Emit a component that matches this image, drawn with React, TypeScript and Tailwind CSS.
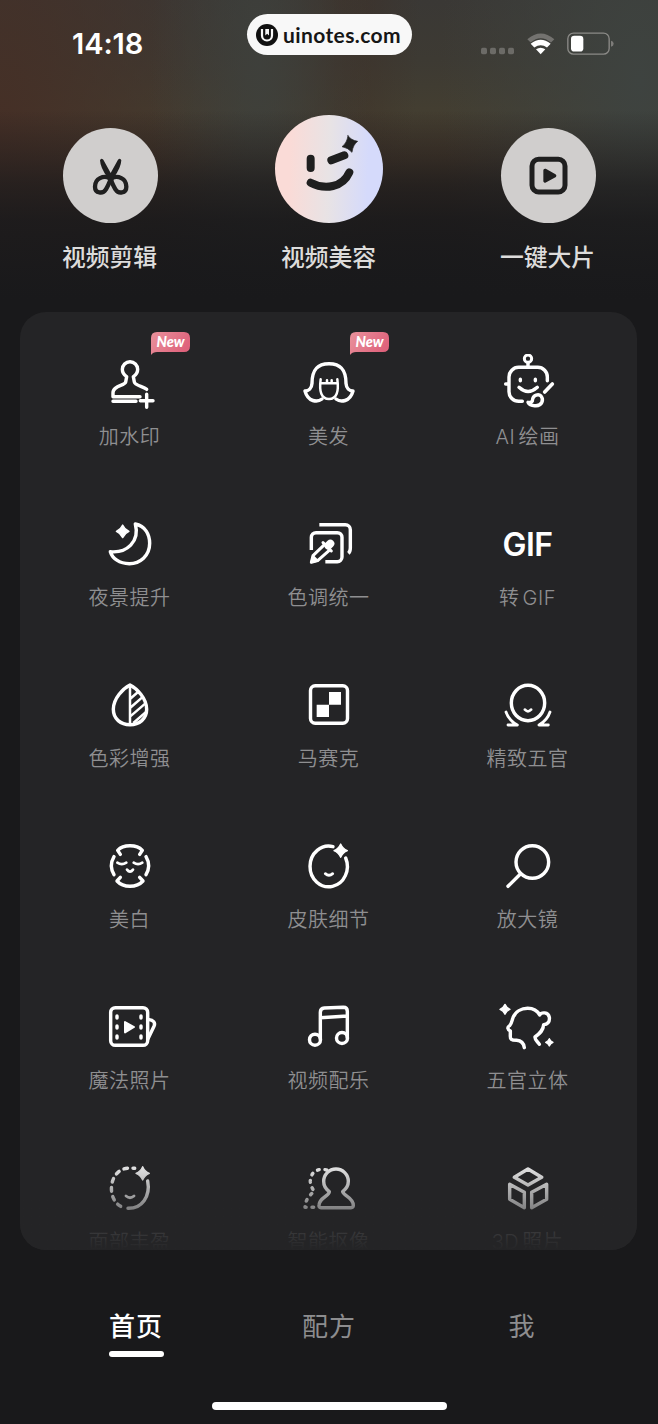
import type { ReactNode } from "react";

const CJK = "font-['Inter','Noto_Sans_CJK_SC',sans-serif]";

/** Four-pointed star with concave sides. */
function Sparkle({ x, y, r }: { x: number; y: number; r: number }) {
  const k = r * 0.3;
  return (
    <path
      d={`M${x} ${y - r}Q${x + k} ${y - k} ${x + r} ${y}Q${x + k} ${y + k} ${x} ${y + r}Q${x - k} ${y + k} ${x - r} ${y}Q${x - k} ${y - k} ${x} ${y - r}Z`}
      fill="currentColor"
      strokeWidth="4"
    />
  );
}

function Glyph({ x, y, children }: { x: number; y: number; children: ReactNode }) {
  return (
    <svg
      viewBox={`${x} ${y} 213 180`}
      className="h-[60px] w-[71px] shrink-0 text-white"
      fill="none"
      stroke="currentColor"
      strokeWidth="10.300"
      strokeLinecap="round"
      strokeLinejoin="round"
    >
      {children}
    </svg>
  );
}

const tools: { label: string; isNew?: boolean; icon: ReactNode }[] = [
  {
    label: "加水印",
    isNew: true,
    icon: (
      <Glyph x={42} y={102}>
        <path d="M200 208C190 199 165 197 163 186L160 170C168 165 173 157 173 148A23 23 0 0 0 127 148C127 157 132 165 140 170L137 186C134 197 99 197 99 218V230H180M99 244H168" />
        <path d="M200 223V262M181 242H219" />
      </Glyph>
    ),
  },
  {
    label: "美发",
    isNew: true,
    icon: (
      <Glyph x={639} y={102}>
        <path d="M726 237C712 248 684 246 675 213C686 213 695 205 696 190C696 150 712 131 747 131C782 131 798 150 798 190C799 205 808 213 819 213C810 246 782 248 768 237" />
        <path strokeWidth="7.5" d="M722 178C717 215 724 237 747 237C770 237 777 215 772 178M723 190H771M741 181V188M755 181V188" />
      </Glyph>
    ),
  },
  {
    label: "AI 绘画",
    icon: (
      <Glyph x={66} y={42}>
        <circle cx="174" cy="56" r="11" strokeWidth="9" />
        <path d="M174 68V80M232 122V112A29 29 0 0 0 203 82H146A29 29 0 0 0 117 111V155A29 29 0 0 0 146 184H157M107 132H115" />
        <path d="M151 118V122M196 118V122M147 142Q174 167 202 142" />
        <path strokeWidth="11" d="M247 132L224 156" />
        <path d="M188 177C190 165 206 161 213 168C222 179 216 197 198 197C187 198 178 195 174 187C183 189 188 185 188 177Z" />
      </Glyph>
    ),
  },
  {
    label: "夜景提升",
    icon: (
      <Glyph x={42} y={45}>
        <path d="M166 72C196 78 209 104 209 130C209 168 180 191 148 191C118 191 97 175 91 155C140 160 180 125 166 72Z" />
        <Sparkle x={128} y={94} r={19} />
      </Glyph>
    ),
  },
  {
    label: "色调统一",
    icon: (
      <Glyph x={39} y={45}>
        <path strokeLinecap="butt" d="M118 74H196A15 15 0 0 1 211 89V144Q211 155 205 160" />
        <path strokeLinecap="butt" d="M94 150V112A14 14 0 0 1 108 98H172A14 14 0 0 1 186 112V171A14 14 0 0 1 172 185H136" />
        <path strokeWidth="9" d="M131 136L99 167L94 187L113 182L147 152" />
        <path fill="currentColor" strokeWidth="6" d="M99 168L94 187L113 182Z" />
        <path strokeWidth="9" d="M129 128L154 153" />
        <path strokeWidth="24" d="M145 137L151 131" />
      </Glyph>
    ),
  },
  {
    label: "转 GIF",
    icon: (
      <div className="flex h-[60px] items-center justify-center font-['Inter',sans-serif] text-[32px] font-semibold tracking-[-0.6px] text-white">
        GIF
      </div>
    ),
  },
  {
    label: "色彩增强",
    icon: (
      <Glyph x={42} y={528}>
        <path d="M150 555C170 565 200 595 200 628C200 657 178 674 150 674C122 674 100 657 100 628C100 595 130 565 150 555Z" />
        <path strokeWidth="7.500" strokeLinecap="butt" d="M150 556V673M150 597L174 576M150 624L190 589M150 650L199 608M160 669L200 634" />
      </Glyph>
    ),
  },
  {
    label: "马赛克",
    icon: (
      <Glyph x={39} y={18}>
        <rect x="91.5" y="47.500" width="111" height="112" rx="14" />
        <path fill="currentColor" stroke="none" d="M147 66H183V104H147V141H110V104H147Z" />
      </Glyph>
    ),
  },
  {
    label: "精致五官",
    icon: (
      <Glyph x={636} y={18}>
        <ellipse cx="744" cy="99" rx="50" ry="53" />
        <path strokeWidth="8.500" d="M735 119Q744 129 753 119M678 126C684 144 697 157 712 165H684M810 126C804 144 791 157 777 165H805" />
      </Glyph>
    ),
  },
  {
    label: "美白",
    icon: (
      <Glyph x={42} y={21}>
        <path d="M121 73L113 61C130 43 170 43 187 61L179 73M121 142L111 153C130 174 170 174 189 153L179 142M102 80C92 97 92 117 102 134M198 80C208 97 208 117 198 134" />
        <path strokeWidth="8" d="M112 98Q125 107 139 98M161 98Q174 107 187 98M141 119Q150 131 159 119" />
      </Glyph>
    ),
  },
  {
    label: "皮肤细节",
    icon: (
      <Glyph x={639} y={21}>
        <path d="M759 50A56 61 0 1 0 797 84" />
        <path strokeWidth="8.500" d="M736 131Q747 141 758 131" />
        <Sparkle x={782} y={62} r={20} />
      </Glyph>
    ),
  },
  {
    label: "放大镜",
    icon: (
      <Glyph x={1236} y={21}>
        <circle cx="1357" cy="96" r="49" />
        <path d="M1322 131L1284 169" />
      </Glyph>
    ),
  },
  {
    label: "魔法照片",
    icon: (
      <Glyph x={42} y={24}>
        <rect x="92" y="53" width="111" height="113" rx="14" />
        <path d="M111 78V84M111 108V114M111 138V144M183 78V84M183 108V114M183 138V144" />
        <path fill="currentColor" strokeWidth="6" d="M135 96L162 111L135 127Z" />
        <path d="M205 88C221 90 227 98 222 109L204 146" />
      </Glyph>
    ),
  },
  {
    label: "视频配乐",
    icon: (
      <Glyph x={639} y={24}>
        <circle cx="705" cy="149" r="16.500" />
        <circle cx="786" cy="144" r="16.500" />
        <path d="M721 147V67Q721 55 733 54L790 52Q802 52 802 64V143M721 83L802 78" />
      </Glyph>
    ),
  },
  {
    label: "五官立体",
    icon: (
      <Glyph x={1236} y={24}>
        <path d="M1333 173C1331 159 1325 152 1310 151C1294 151 1290 149 1291 135V123C1282 118 1281 112 1289 107C1296 99 1296 90 1299 83C1306 64 1325 55 1343 55C1360 55 1372 62 1379 75C1384 66 1405 65 1408 82C1410 97 1401 103 1391 104C1390 121 1380 130 1365 141C1364 151 1374 155 1378 163" />
        <Sparkle x={1275} y={58} r={15} />
        <Sparkle x={1408} y={157} r={11} />
      </Glyph>
    ),
  },
  {
    label: "面部丰盈",
    icon: (
      <Glyph x={42} y={27}>
        <path d="M203 93C212 140 185 176 144 175" />
        <path strokeDasharray="11 16.5" d="M122 169C88 150 86 95 112 69C125 56 140 53 164 55" />
        <path strokeWidth="8.500" d="M138 138Q150 148 162 138" />
        <Sparkle x={188} y={70} r={20} />
      </Glyph>
    ),
  },
  {
    label: "智能抠像",
    icon: (
      <Glyph x={639} y={27}>
        <path d="M748 125C735 116 731 105 731 94A37 37 0 0 1 805 94C805 106 800 116 788 125C791 138 820 142 820 166Q820 173 813 173H723Q716 173 717 165C719 142 746 140 748 125Z" />
        <path strokeDasharray="5 17.500" d="M740 60C710 52 690 70 691 95C692 110 700 118 702 125C690 135 675 150 675 172H708" />
      </Glyph>
    ),
  },
  {
    label: "3D 照片",
    icon: (
      <Glyph x={1236} y={27}>
        <path d="M1344 57L1385 82L1344 105L1303 82ZM1289 103L1333 127V173L1289 148ZM1400 103L1355 127V173L1400 148Z" />
      </Glyph>
    ),
  },
];

function NewBadge() {
  return (
    <div className="absolute top-0 left-[121px] h-[23px] w-[39px]">
      <svg viewBox="0 0 39 23" className="absolute inset-0 size-full">
        <defs>
          <linearGradient id="badge" x1="0" y1="0" x2="1" y2="0.4">
            <stop offset="0" stopColor="#e9929c" />
            <stop offset="1" stopColor="#df637c" />
          </linearGradient>
        </defs>
        <path d="M6 0H33Q39 0 39 6V14Q39 20 33 20H6Q2 20 0 23V6Q0 0 6 0Z" fill="url(#badge)" />
      </svg>
      <span className="relative block text-center font-['Lato',sans-serif] text-[14.500px] leading-[20px] font-black text-white italic">
        New
      </span>
    </div>
  );
}

function StatusBar() {
  return (
    <div className="flex h-[114px] items-start justify-between pr-[43px] pl-[72px]">
      <span className="mt-[26px] w-[175px] font-['Inter',sans-serif] text-[29px] leading-[36px] font-semibold tracking-[-0.1px] text-white">
        14:18
      </span>
      <div className="mt-[14px] flex h-[41px] w-[165px] items-center gap-[5px] rounded-full bg-[#f8f8f8] pl-[9px]">
        <svg viewBox="0 0 22 22" className="size-[22px] shrink-0">
          <circle cx="11" cy="11" r="11" fill="#111" />
          <path d="M6 5V11.500A5 5 0 0 0 16 11.500V5" fill="none" stroke="#f8f8f8" strokeWidth="2.200" />
          <path d="M9.300 5H13V11.500L11.150 9.800L9.300 11.500Z" fill="#f8f8f8" />
        </svg>
        <span className="font-['Lato',sans-serif] text-[21px] leading-[40px] font-bold tracking-[0.4px] text-[#161616]">
          uinotes.com
        </span>
      </div>
      <svg viewBox="750 90 405 80" className="mt-[30px] ml-[68px] h-[27px] w-[135px] shrink-0">
        {[753, 780, 807, 834].map((x) => (
          <rect key={x} x={x} y="143" width="18" height="19" rx="5" fill="#6c6b67" />
        ))}
        <path d="M892 117Q932 83 973 117L963 127Q932 101 902 127Z" fill="#73726f" />
        <path d="M902 131Q932 107 962 131L951 142Q932 128 913 142Z" fill="#fff" />
        <path d="M918 147Q932 138 946 147L932 162Z" fill="#fff" />
        <rect x="1013.500" y="99" width="124" height="63" rx="17" fill="none" stroke="#8b8a87" strokeWidth="4" />
        <rect x="1023" y="107" width="37" height="47" rx="10" fill="#fff" />
        <path d="M1143 122Q1151 124 1151 131Q1151 138 1143 140Z" fill="#7d7c79" />
      </svg>
    </div>
  );
}

function Feature({ label, children }: { label: string; children: ReactNode }) {
  return (
    <div className="flex w-[110px] flex-col items-center justify-end">
      {children}
      <span className={`${CJK} mt-[17px] -mb-px -ml-px text-[23.800px] leading-[36px] font-medium whitespace-nowrap text-[#dddcdb]`}>
        {label}
      </span>
    </div>
  );
}

function Features() {
  return (
    <div className="flex h-[161px] justify-between px-[55px]">
      <Feature label="视频剪辑">
        <svg viewBox="66 84 285 285" className="size-[95px] rounded-full bg-[#d0cecd] text-[#1f1f1f]" fill="none" stroke="currentColor" strokeWidth="13" strokeLinejoin="round">
          <path d="M205 234C188 226 162 234 162 260C162 281 186 282 194 269C201 259 206 246 210 235" />
          <path d="M213 234C230 226 256 234 256 260C256 281 232 282 224 269C217 259 212 246 208 235" />
          <path fill="currentColor" stroke="none" d="M177 181Q180 172 187 179L209 219L231 179Q238 172 241 181Q240 203 219 232L216 246H202L199 232Q178 203 177 181Z" />
        </svg>
      </Feature>
      <Feature label="视频美容">
        <svg viewBox="45 45 324 324" className="size-[108px] rounded-full bg-[linear-gradient(92deg,#fadbd7_15%,#e8e3e5_50%,#d5dafb_85%)] text-[#1f1f1f]" fill="none" stroke="currentColor" strokeWidth="24" strokeLinecap="round">
          <path d="M152 176V204M214 181L253 166M152 248C195 271 248 262 268 217" />
          <path fill="currentColor" stroke="currentColor" strokeWidth="2" strokeLinejoin="round" d="M264 107Q272 120 293 124Q279 134 276 157Q264 143 246 140Q261 129 264 107Z" />
        </svg>
      </Feature>
      <Feature label="一键大片">
        <svg viewBox="723 84 285 285" className="size-[95px] rounded-full bg-[#d0cecd] text-[#1f1f1f]" fill="none" stroke="currentColor" strokeWidth="15" strokeLinejoin="round">
          <rect x="816" y="178" width="99" height="98" rx="20" />
          <path fill="currentColor" strokeWidth="10" d="M855 211L884 227L855 243Z" />
        </svg>
      </Feature>
    </div>
  );
}

function ToolPanel() {
  return (
    <div className="relative mx-[20px] mt-[37px] h-[938px] w-[617px] overflow-hidden rounded-[26px] bg-[#242426] pt-[20px]">
      <div className="mx-auto grid w-[597px] grid-cols-3">
        {tools.map((tool) => (
          <div key={tool.label} className="relative flex h-[161px] flex-col items-center pt-[22px]">
            {tool.isNew && <NewBadge />}
            {tool.icon}
            <span className={`${CJK} mt-[9px] text-[20px] leading-[28px] font-[350] tracking-[0.5px] whitespace-nowrap text-[#8f8f91] [word-spacing:-3px]`}>
              {tool.label}
            </span>
          </div>
        ))}
      </div>
      <div className="absolute inset-x-0 bottom-0 h-[96px] bg-linear-to-b from-[#242426]/0 to-[#242426]" />
    </div>
  );
}

function TabBar() {
  return (
    <nav className={`${CJK} grid grid-cols-[193px_193px_193px] justify-center pt-[57px] text-center text-[26px] leading-[40px] tracking-[1px] text-[#8d8d8f]`}>
      <div className="flex flex-col items-center font-medium text-white">
        <span>首页</span>
        <span className="mt-[4px] h-[6px] w-[55px] rounded-full bg-white" />
      </div>
      <span>配方</span>
      <span>我</span>
    </nav>
  );
}

export default function App() {
  return (
    <div className="flex h-[1424px] w-[658px] flex-col overflow-hidden bg-[#19191b] bg-[linear-gradient(180deg,rgba(25,25,27,0)_110px,rgba(25,25,27,0.35)_150px,rgba(25,25,27,0.68)_185px,rgba(25,25,27,0.88)_220px,#19191b_300px),radial-gradient(ellipse_at_640px_80px,#3e4340_0px,rgba(62,67,64,0)_200px),radial-gradient(ellipse_at_260px_65px,rgba(62,64,60,0.9)_0px,rgba(62,64,60,0)_110px),radial-gradient(ellipse_at_0px_135px,#452f26_0px,rgba(69,47,38,0)_250px),radial-gradient(ellipse_at_340px_0px,rgba(62,48,39,0.7)_0px,rgba(62,48,39,0)_80px),linear-gradient(180deg,#3a3835_0px,#3d3a33_60px,#433e31_110px,#46382b_160px,#3a2c23_220px,#19191b_300px)] bg-no-repeat">
      <StatusBar />
      <Features />
      <ToolPanel />
      <TabBar />
      <div className="mx-auto mt-auto mb-[14px] h-[8px] w-[235px] rounded-full bg-white" />
    </div>
  );
}
